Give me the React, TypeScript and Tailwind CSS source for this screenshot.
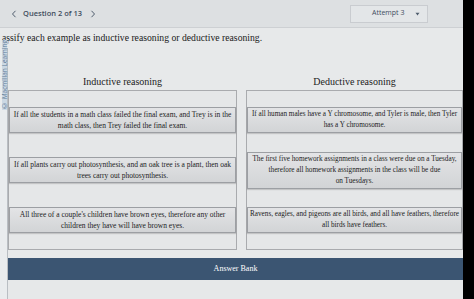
import React from "react";

const serif = { fontFamily: '"Liberation Serif", "Times New Roman", serif' };
const sans = { fontFamily: '"Open Sans", "Noto Sans", sans-serif' };

function Card({ lines, small }: { lines: string[]; small?: boolean }) {
  return (
    <div
      className={
        "w-full border border-[#9c9fa3] bg-gradient-to-b from-[#e3e4e6] to-[#d2d4d6] px-[1px] py-[1px] text-center leading-[11px] text-[#1c1c1c] shadow-[0_1px_1px_rgba(0,0,0,0.15)] whitespace-nowrap overflow-hidden " +
        (small ? "text-[7.2px]" : "text-[7.5px]")
      }
      style={serif}
    >
      {lines.map((l, i) => (
        <React.Fragment key={i}>
          {l}
          {i < lines.length - 1 && <br />}
        </React.Fragment>
      ))}
    </div>
  );
}

function Column({ title, cards, small }: { title: string; cards: string[][]; small?: boolean }) {
  return (
    <div className="flex flex-col">
      <div className="text-center text-[10px] leading-[12px] text-[#222] whitespace-nowrap" style={serif}>
        {title}
      </div>
      <div className="mt-[2px] border border-[#a9abae] bg-[#e5e7e8] py-[4px]">
        {cards.map((c, i) => (
          <div key={i} className="h-[50px] flex items-center">
            <Card lines={c} small={small} />
          </div>
        ))}
      </div>
    </div>
  );
}

export default function App() {
  return (
    <div className="w-[474px] h-[299px] flex overflow-hidden bg-black">
      <div className="w-[463px] flex flex-col bg-[#e7e9ea] overflow-hidden">
        {/* top bar */}
        <div className="h-[28px] shrink-0 flex items-center bg-[#dde0e2] border-b border-[#cdd0d3] pl-[11px] pr-[35px]" style={sans}>
          <svg width="6" height="8" viewBox="0 0 6 8" className="mr-[6px]">
            <path d="M4.5 0.8 L1.5 4 L4.5 7.2" fill="none" stroke="#4f5d6d" strokeWidth="1" />
          </svg>
          <span className="text-[7.5px] text-[#3f4d5e] font-semibold whitespace-nowrap">Question 2 of 13</span>
          <svg width="6" height="8" viewBox="0 0 6 8" className="ml-[8px]">
            <path d="M1.5 0.8 L4.5 4 L1.5 7.2" fill="none" stroke="#4f5d6d" strokeWidth="1" />
          </svg>
          <div className="ml-auto w-[78px] h-[18px] flex items-center border border-[#c9ccd0] bg-[#e3e6e8] pl-[21px] pr-[7px]">
            <span className="text-[7px] text-[#3f4d5e] whitespace-nowrap">Attempt 3</span>
            <svg width="5" height="4" viewBox="0 0 5 4" className="ml-auto">
              <path d="M0.5 0.8 L4.5 0.8 L2.5 3.4 Z" fill="#4f5d6d" />
            </svg>
          </div>
        </div>

        {/* question */}
        <div className="h-[20px] shrink-0 flex items-center pl-[2px] text-[9.7px] text-[#1a1a1a] whitespace-nowrap" style={serif}>
          assify each example as inductive reasoning or deductive reasoning.
        </div>

        <div className="flex-1 flex min-h-0">
          {/* sidebar */}
          <div className="w-[8px] shrink-0 border-r border-[#b9bec3] bg-[#e9ecee] pl-[2px]">
            <div
              className="-mt-[8px] [writing-mode:vertical-rl] rotate-180 bg-[#cbd8e3] text-[6.5px] leading-[5px] text-[#5d7b98] whitespace-nowrap w-[5px]"
              style={sans}
            >
              © Macmillan Learning
            </div>
          </div>

          {/* main */}
          <div className="flex-1 flex flex-col overflow-hidden">
            <div className="pt-[28px] flex gap-[9px]">
              <div className="w-[229px] shrink-0">
                <Column
                  title="Inductive reasoning"
                  cards={[
                    [
                      "If all the students in a math class failed the final exam, and Trey is in the",
                      "math class, then Trey failed the final exam.",
                    ],
                    [
                      "If all plants carry out photosynthesis, and an oak tree is a plant, then oak",
                      "trees carry out photosynthesis.",
                    ],
                    [
                      "All three of a couple's children have brown eyes, therefore any other",
                      "children they have will have brown eyes.",
                    ],
                  ]}
                />
              </div>
              <div className="flex-1 min-w-0">
                <Column
                  small
                  title="Deductive reasoning"
                  cards={[
                    [
                      "If all human males have a Y chromosome, and Tyler is male, then Tyler",
                      "has a Y chromosome.",
                    ],
                    [
                      "The first five homework assignments in a class were due on a Tuesday,",
                      "therefore all homework assignments in the class will be due",
                      "on Tuesdays.",
                    ],
                    [
                      "Ravens, eagles, and pigeons are all birds, and all have feathers, therefore",
                      "all birds have feathers.",
                    ],
                  ]}
                />
              </div>
            </div>

            <div className="mt-[8px] h-[22px] shrink-0 flex items-center justify-center bg-[#3b5572] text-[8px] text-white" style={serif}>
              Answer Bank
            </div>
            <div className="flex-1 bg-[#e6e8e9]" />
          </div>
        </div>
      </div>
      <div className="flex-1 bg-black" />
    </div>
  );
}
